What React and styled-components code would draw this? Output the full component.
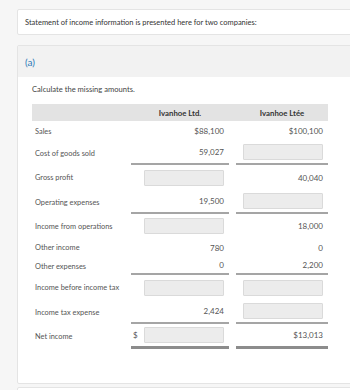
import styled, { createGlobalStyle } from "styled-components";

const GlobalStyle = createGlobalStyle`
  html, body {
    margin: 0;
    padding: 0;
    background: #f6f6f6;
    overflow: hidden;
  }
  body {
    font-family: Lato, "Open Sans", sans-serif;
    color: #444;
  }
`;

const Page = styled.div`
  width: 350px;
  height: 390px;
  overflow: hidden;
  padding: 9px 0 0 17px;
  box-sizing: border-box;
`;

const Card = styled.div`
  width: 350px;
  background: #fff;
  border: 1px solid #e4e4e4;
  border-radius: 2px;
  box-sizing: border-box;
`;

const IntroCard = styled(Card)`
  height: 26px;
  display: flex;
  align-items: center;
  padding: 0 7px;
  font-size: 7.5px;
  color: #333;
`;

const PartCard = styled(Card)`
  margin-top: 10px;
  height: 339px;
`;

const NextCard = styled(Card)`
  margin-top: 3px;
  height: 20px;
`;

const PartHeader = styled.div`
  height: 31px;
  background: #f2f2f2;
  display: flex;
  align-items: center;
  padding: 0 7px;
  font-size: 10px;
  color: #2d7ab8;
`;

const PartBody = styled.div`
  padding: 5px 14px 0 14px;
`;

const Prompt = styled.div`
  font-size: 7.6px;
  color: #444;
  height: 14px;
  line-height: 14px;
  margin-bottom: 8px;
`;

const Table = styled.div`
  width: 296px;
  display: grid;
  grid-template-columns: 99px 98px 7px 92px;
`;

const HeadCell = styled.div`
  background: #e3e3e3;
  height: 17px;
  display: flex;
  align-items: center;
  justify-content: center;
  font-size: 7.8px;
  font-weight: 700;
  color: #333;
`;

const Cell = styled.div`
  height: ${(p) => p.$h}px;
  display: flex;
  align-items: center;
  justify-content: ${(p) => (p.$label ? "flex-start" : "flex-end")};
  padding: ${(p) => (p.$label ? "0 0 0 3px" : "0 5px 0 2px")};
  font-size: ${(p) => (p.$label ? "7.4px" : "8px")};
  color: #555;
  white-space: nowrap;
  box-sizing: border-box;
  border-bottom: ${(p) =>
    p.$rule === "double"
      ? "3px solid #8c8c8c"
      : p.$rule === "single"
      ? "2px solid #a5a5a5"
      : "0"};
`;

const Gap = styled.div``;

const Dollar = styled.span`
  margin-right: auto;
  font-size: 8px;
  color: #555;
`;

const Input = styled.div`
  width: 80px;
  height: 16px;
  background: #ececec;
  border: 1px solid #dadada;
  border-radius: 1px;
  box-sizing: border-box;
`;

const rows = [
  { label: "Sales", h: 20, a: "$88,100", b: "$100,100" },
  { label: "Cost of goods sold", h: 24, a: "59,027", b: null, ruleA: "single", ruleB: "single" },
  { label: "Gross profit", h: 25, a: null, b: "40,040" },
  { label: "Operating expenses", h: 24, a: "19,500", b: null, ruleA: "single", ruleB: "single" },
  { label: "Income from operations", h: 24, a: null, b: "18,000" },
  { label: "Other income", h: 19, a: "780", b: "0" },
  { label: "Other expenses", h: 18, a: "0", b: "2,200", ruleA: "single", ruleB: "single" },
  { label: "Income before income tax", h: 25, a: null, b: null },
  { label: "Income tax expense", h: 24, a: "2,424", b: null, ruleA: "single", ruleB: "single" },
  { label: "Net income", h: 25, a: null, b: "$13,013", dollar: true, ruleA: "double", ruleB: "double" },
];

const App = () => {
  return (
    <Page>
      <GlobalStyle />
      <IntroCard>Statement of income information is presented here for two companies:</IntroCard>
      <PartCard>
        <PartHeader>(a)</PartHeader>
        <PartBody>
          <Prompt>Calculate the missing amounts.</Prompt>
          <Table>
            <HeadCell />
            <HeadCell>Ivanhoe Ltd.</HeadCell>
            <HeadCell />
            <HeadCell>Ivanhoe Ltée</HeadCell>
            {rows.map((r) => [
              <Cell key={r.label + "l"} $label $h={r.h}>
                {r.label}
              </Cell>,
              <Cell key={r.label + "a"} $h={r.h} $rule={r.ruleA}>
                {r.dollar && <Dollar>$</Dollar>}
                {r.a === null ? <Input /> : r.a}
              </Cell>,
              <Gap key={r.label + "g"} />,
              <Cell key={r.label + "b"} $h={r.h} $rule={r.ruleB}>
                {r.b === null ? <Input /> : r.b}
              </Cell>,
            ])}
          </Table>
        </PartBody>
      </PartCard>
      <NextCard />
    </Page>
  );
};

export default App;
